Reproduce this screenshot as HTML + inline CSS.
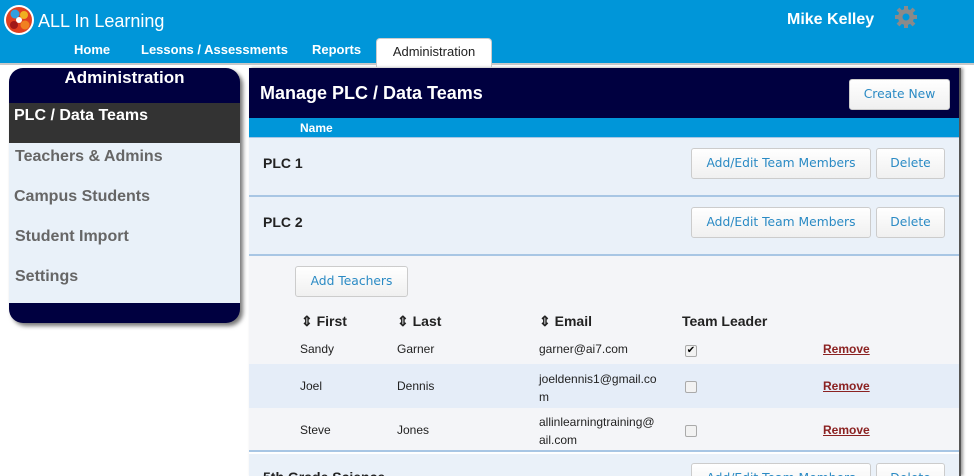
<!DOCTYPE html>
<html style="width:974px;height:476px;overflow:hidden"><head><style>
*{margin:0;padding:0;box-sizing:border-box}
body{width:974px;height:476px;overflow:hidden;background:#fff;font-family:"Liberation Sans",Arial,sans-serif;position:relative}
.abs{position:absolute}
.hdr{left:0;top:0;width:974px;height:65px;background:#0096d9;border-bottom:2px solid #c8c8c8}
.nav{color:#fff;font-weight:bold;font-size:13px;top:42px}
.btn{position:absolute;background:linear-gradient(#fff,#f0f0f0);border:1px solid #ccc;border-radius:3px;color:#2a8ac4;font-family:"DejaVu Sans",sans-serif;font-size:12.3px;text-align:center;line-height:29px;height:31px}
.side{left:9px;top:68px;width:231px;height:255px;background:#000040;border-radius:14px;box-shadow:3px 3px 4px #777;overflow:hidden}
.si{position:absolute;left:0;width:231px;height:160px;top:75px;background:#e9f1f9}
.sl{position:absolute;left:6px;font-size:16px;font-weight:bold;color:#666}
.main{left:249px;top:68px;width:712px;height:408px;border-right:2px solid #555;box-shadow:2px 0 3px #999;overflow:hidden}
.row{position:absolute;left:0;width:710px;background:#eaf1f9;border-bottom:2px solid #a8c6e4}
.t{position:absolute;font-size:12px;color:#222}
.h{position:absolute;font-size:14px;font-weight:bold;color:#222}
.cb{position:absolute;width:12px;height:12px;border:1px solid #aaa;border-radius:2px;background:#f2f2f2}
.rm{position:absolute;font-size:12px;font-weight:bold;color:#8b2222;text-decoration:underline}
</style></head><body>
<div class="abs hdr"></div>
<svg class="abs" style="left:3px;top:4px" width="32" height="32" viewBox="0 0 32 32"><circle cx="16" cy="16" r="15" fill="#fff"/><circle cx="16" cy="16" r="13" fill="#e04020"/><circle cx="12" cy="10" r="4.5" fill="#30a0e0"/><circle cx="21" cy="11" r="4" fill="#f0b020"/><circle cx="22" cy="21" r="4.5" fill="#f08020"/><circle cx="11" cy="21" r="4" fill="#a01818"/><circle cx="16" cy="16" r="3" fill="#fff"/></svg>
<div class="abs" style="left:38px;top:11px;color:#fff;font-size:18px">ALL In Learning</div>
<div class="abs nav" style="left:74px">Home</div>
<div class="abs nav" style="left:141px">Lessons / Assessments</div>
<div class="abs nav" style="left:312px">Reports</div>
<div class="abs" style="left:376px;top:38px;width:116px;height:29px;background:#fff;border:1px solid #ccc;border-bottom:none;border-radius:4px 4px 0 0;font-size:13px;color:#222;text-align:center;line-height:25px">Administration</div>
<div class="abs" style="left:787px;top:11px;color:#fff;font-weight:bold;font-size:16px">Mike Kelley</div>
<svg class="abs" style="left:893px;top:4px" width="26" height="26" viewBox="0 0 26 26"><g fill="#8a8a8a"><circle cx="13" cy="13" r="8"/><g stroke="#8a8a8a" stroke-width="4"><line x1="13" y1="2" x2="13" y2="24"/><line x1="2" y1="13" x2="24" y2="13"/><line x1="5" y1="5" x2="21" y2="21"/><line x1="21" y1="5" x2="5" y2="21"/></g></g><circle cx="13" cy="13" r="3.5" fill="#0096d9"/></svg>

<div class="abs side">
<div style="position:absolute;top:0;width:231px;text-align:center;color:#fff;font-weight:bold;font-size:17px">Administration</div>
<div style="position:absolute;top:35px;left:0;width:231px;height:40px;background:#333"></div>
<div style="position:absolute;top:39px;left:5px;color:#fff;font-weight:bold;font-size:16px">PLC / Data Teams</div>
<div class="si"></div>
<div class="sl" style="top:80px">Teachers &amp; Admins</div>
<div class="sl" style="top:120px;left:5px">Campus Students</div>
<div class="sl" style="top:160px">Student Import</div>
<div class="sl" style="top:200px">Settings</div>
</div>

<div class="abs main">
<div class="abs" style="left:0;top:0;width:710px;height:50px;background:#000040"></div>
<div class="abs" style="left:11px;top:15px;color:#fff;font-weight:bold;font-size:18px">Manage PLC / Data Teams</div>
<div class="btn" style="left:600px;top:11px;width:101px">Create New</div>
<div class="abs" style="left:0;top:50px;width:710px;height:20px;background:#0096d9;border-bottom:1px solid #a8c6e4"></div>
<div class="abs" style="left:51px;top:53px;color:#fff;font-weight:bold;font-size:12px">Name</div>
<div class="row" style="top:70px;height:59px"><div class="h" style="left:14px;top:17px">PLC 1</div>
<div class="btn" style="left:442px;top:10px;width:180px">Add/Edit Team Members</div><div class="btn" style="left:627px;top:10px;width:69px">Delete</div></div>
<div class="row" style="top:129px;height:59px"><div class="h" style="left:14px;top:17px">PLC 2</div>
<div class="btn" style="left:442px;top:10px;width:180px">Add/Edit Team Members</div><div class="btn" style="left:627px;top:10px;width:69px">Delete</div></div>
<div class="abs" style="left:0;top:188px;width:710px;height:196px;background:#f4f5f8;border-bottom:2px solid #a8c6e4"></div>
<div class="btn" style="left:46px;top:198px;width:113px">Add Teachers</div>
<div class="h" style="left:52px;top:245px">&#8661; First</div>
<div class="h" style="left:148px;top:245px">&#8661; Last</div>
<div class="h" style="left:290px;top:245px">&#8661; Email</div>
<div class="h" style="left:433px;top:245px">Team Leader</div>
<div class="t" style="left:51px;top:274px">Sandy</div><div class="t" style="left:148px;top:274px">Garner</div><div class="t" style="left:290px;top:274px">garner@ai7.com</div>
<div class="cb" style="left:436px;top:277px;font-size:10px;line-height:10px;text-align:center">&#10004;</div><div class="rm" style="left:574px;top:274px">Remove</div>
<div class="abs" style="left:0;top:296px;width:710px;height:44px;background:#e5edf8"></div>
<div class="t" style="left:51px;top:311px">Joel</div><div class="t" style="left:148px;top:311px">Dennis</div><div class="t" style="left:290px;top:302px;line-height:18px">joeldennis1@gmail.co<br>m</div>
<div class="cb" style="left:436px;top:313px"></div><div class="rm" style="left:574px;top:311px">Remove</div>
<div class="t" style="left:51px;top:355px">Steve</div><div class="t" style="left:148px;top:355px">Jones</div><div class="t" style="left:290px;top:345px;line-height:18px">allinlearningtraining@<br>ail.com</div>
<div class="cb" style="left:436px;top:357px"></div><div class="rm" style="left:574px;top:355px">Remove</div>
<div class="row" style="top:386px;height:59px"><div class="h" style="left:14px;top:15px">5th Grade Science</div>
<div class="btn" style="left:442px;top:9px;width:180px">Add/Edit Team Members</div><div class="btn" style="left:627px;top:9px;width:69px">Delete</div></div>
</div>
</body></html>
